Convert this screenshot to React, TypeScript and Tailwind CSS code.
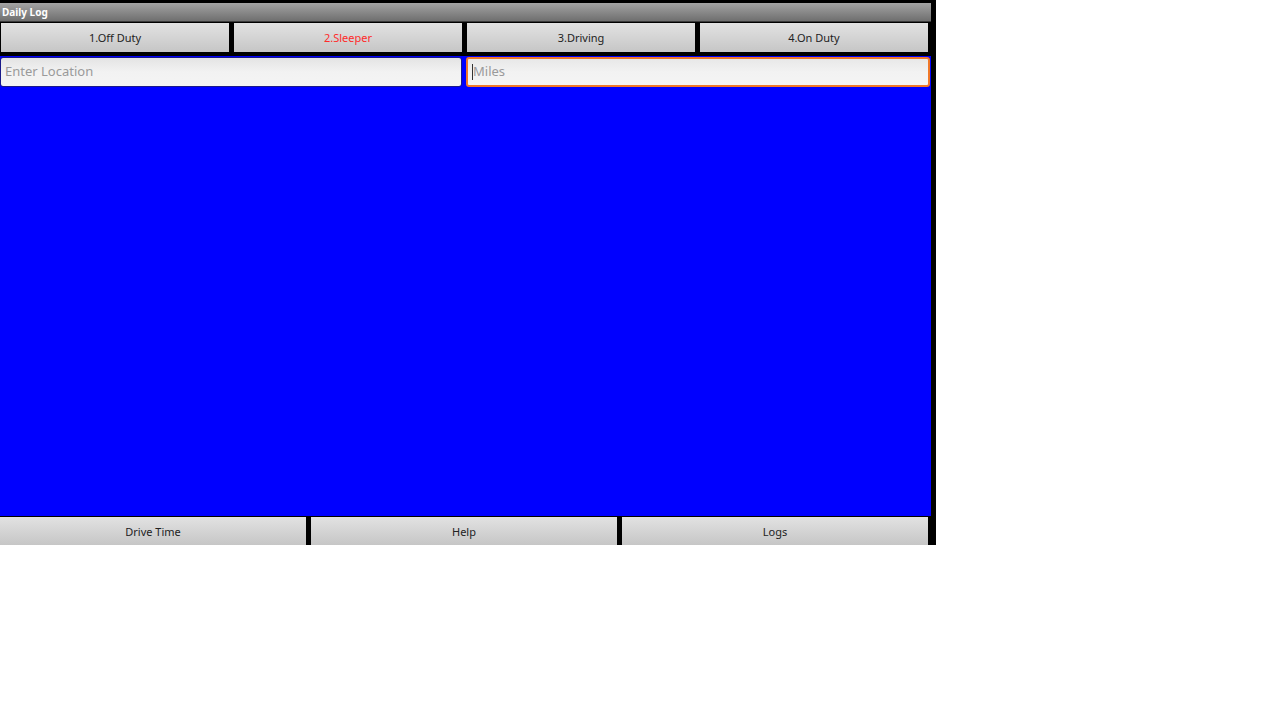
import React from 'react';

const STATUS = [
    { label: '1.Off Duty', active: false },
    { label: '2.Sleeper', active: true },
    { label: '3.Driving', active: false },
    { label: '4.On Duty', active: false },
];

const FOOTER = ['Drive Time', 'Help', 'Logs'];

const btn =
    'flex items-center justify-center bg-gradient-to-b from-[#e2e2e2] via-[#d4d4d4] to-[#c6c6c6] text-[11px] leading-none';

export default function App() {
    return (
        <div className="w-full min-h-screen bg-white" style={{ fontFamily: '"Noto Sans", "Open Sans", sans-serif' }}>
            <div className="w-[936px] h-[545px] bg-black flex flex-col pt-[3px]">
                {/* title bar */}
                <div className="h-[19px] mr-[5px] flex items-center pl-[2px] bg-gradient-to-b from-[#a4a4a4] to-[#6f6f6f] border-b border-[#3a3a3a]">
                    <span className="text-white text-[10px] font-bold leading-none">Daily Log</span>
                </div>

                {/* status buttons */}
                <div className="mt-[1px] h-[29px] ml-[1px] mr-[8px] grid grid-cols-4 gap-[5px]">
                    {STATUS.map((s) => (
                        <button
                            key={s.label}
                            className={`${btn} ${s.active ? 'text-[#ff2a2a]' : 'text-[#222]'}`}
                        >
                            {s.label}
                        </button>
                    ))}
                </div>

                {/* blue work area */}
                <div className="mt-[4px] mr-[5px] flex-1 bg-[#0000ff] flex flex-col">
                    <div className="mt-[1px] h-[30px] flex gap-[4px] pr-[1px]">
                        <div className="w-[462px] rounded-[3px] border border-[#1a1a8a] bg-gradient-to-b from-[#e4e4e4] via-[#f2f2f2] to-[#f4f4f4] flex items-center pl-[4px]">
                            <span className="text-[13px] text-[#9a9a9a]">Enter Location</span>
                        </div>
                        <div className="flex-1 rounded-[3px] border-2 border-[#f07828] bg-gradient-to-b from-[#e8e8e8] via-[#f2f2f2] to-[#f4f4f4] flex items-center pl-[4px]">
                            <span className="w-[1px] h-[16px] bg-[#333]" />
                            <span className="text-[13px] text-[#9a9a9a]">Miles</span>
                        </div>
                    </div>
                    <div className="flex-1" />
                </div>

                {/* footer */}
                <div className="mt-[1px] h-[28px] mr-[8px] grid grid-cols-3 gap-[5px]">
                    {FOOTER.map((f) => (
                        <button key={f} className={`${btn} text-[#222]`}>
                            {f}
                        </button>
                    ))}
                </div>
            </div>
        </div>
    );
}
